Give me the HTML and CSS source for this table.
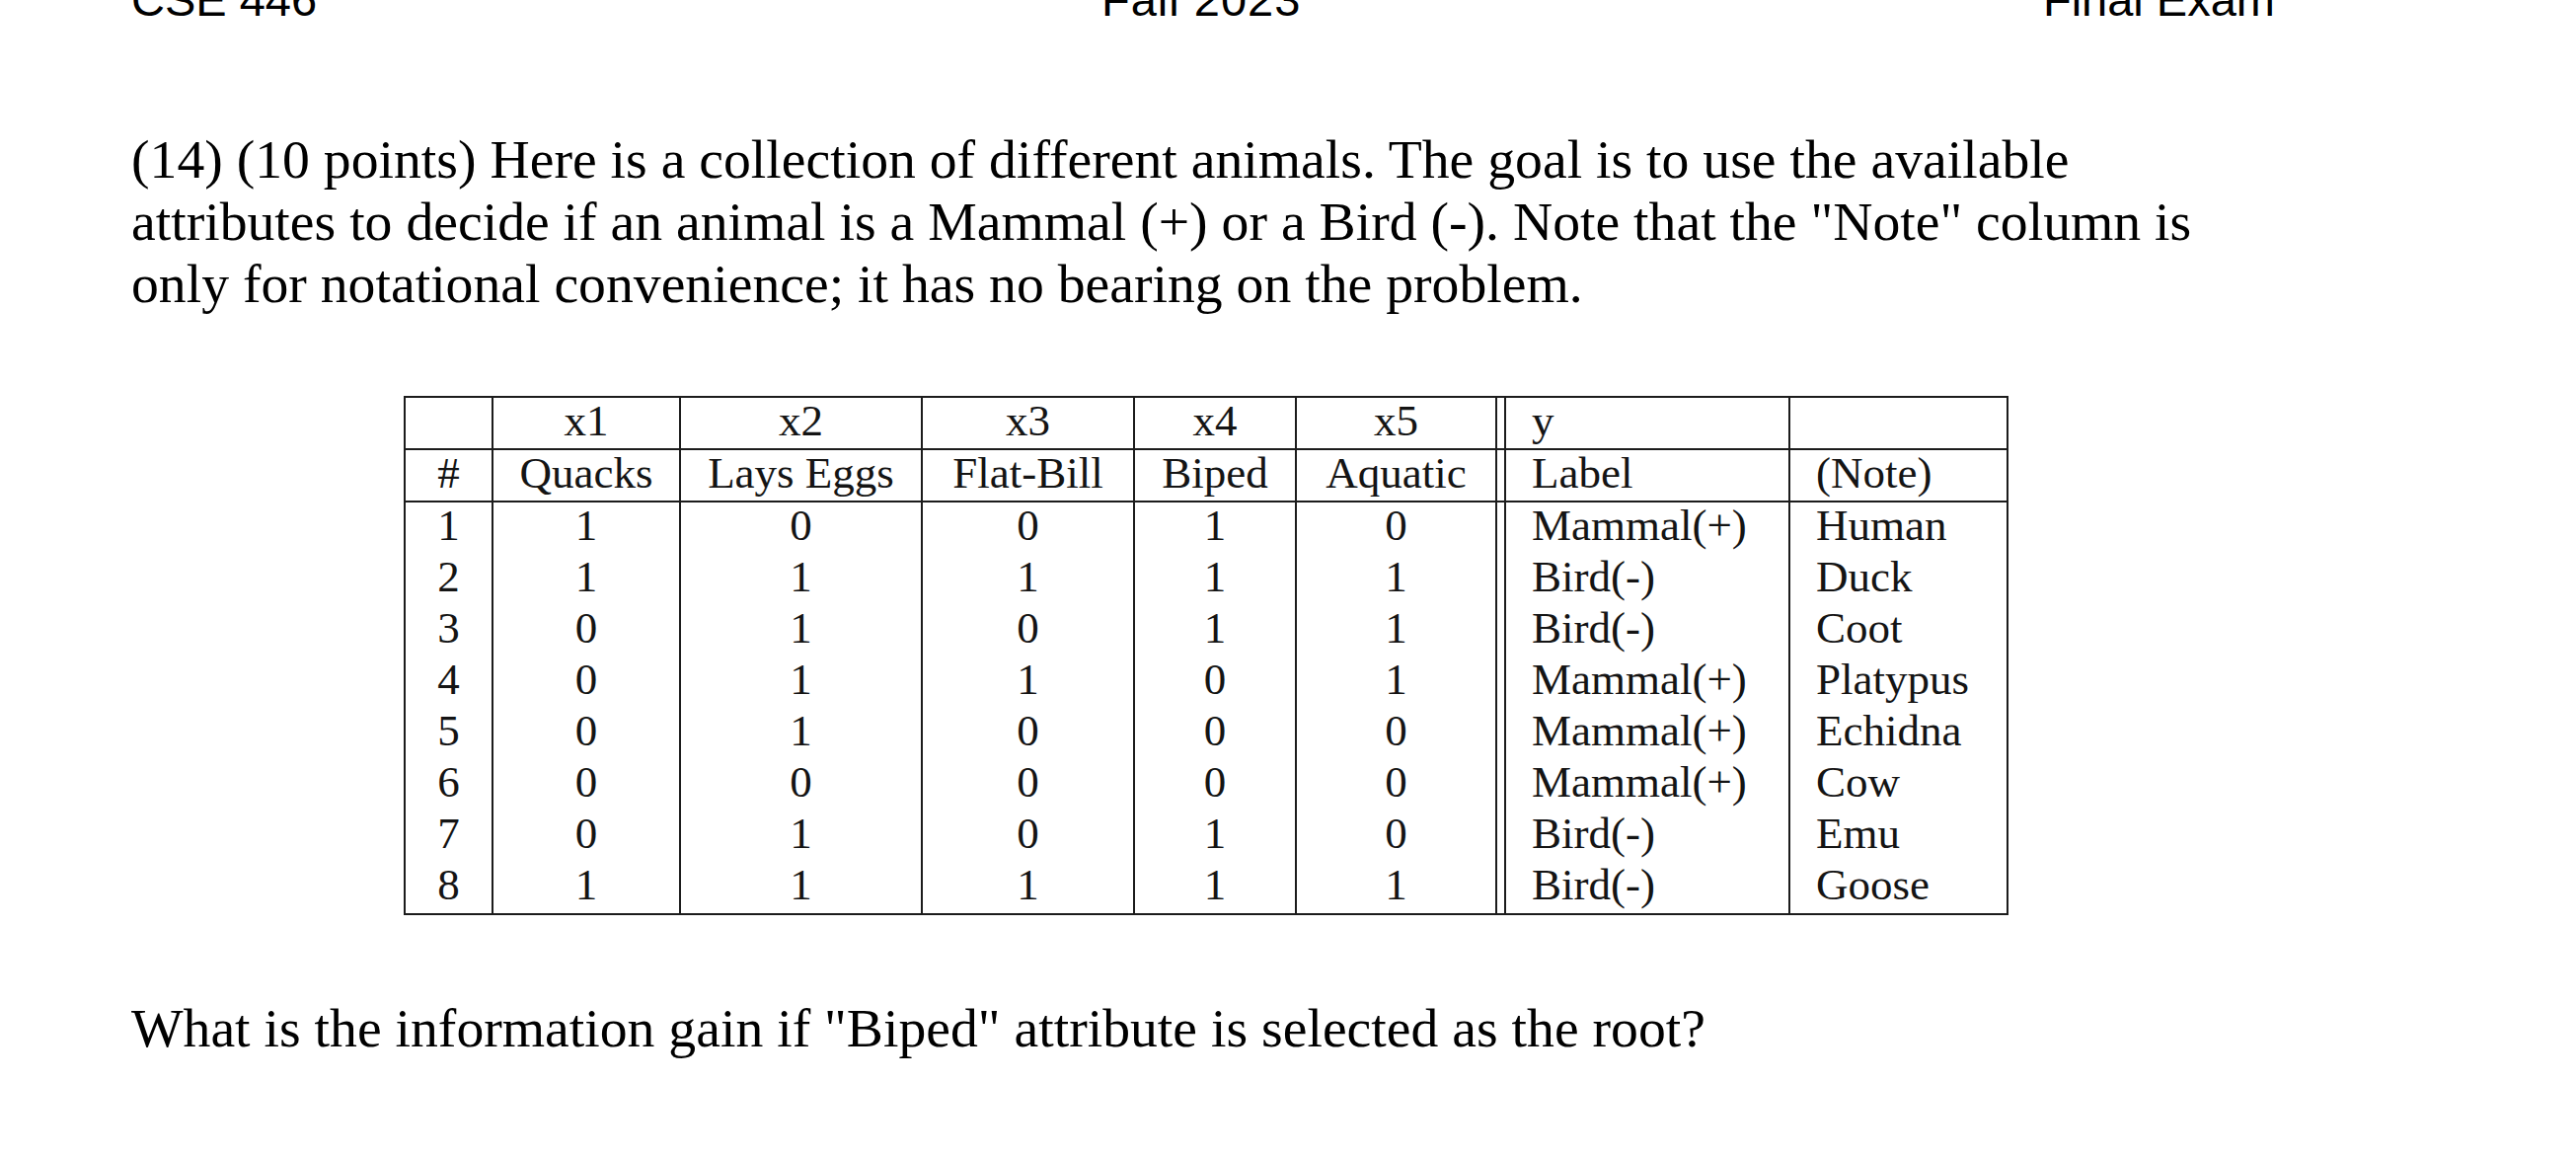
FILE: index.html
```html
<!DOCTYPE html>
<html lang="en">
<head>
<meta charset="utf-8">
<title>CSE 446 Final Exam</title>
<link rel="stylesheet" href="styles.css">
</head>
<body>
<div class="page">
  <header class="running-head">
    <span class="rh-left">CSE 446</span>
    <span class="rh-center">Fall 2023</span>
    <span class="rh-right">Final Exam</span>
  </header>

  <p class="question">(14) (10 points) Here is a collection of different animals. The goal is to use the available<br>attributes to decide if an animal is a Mammal (+) or a Bird (-). Note that the "Note" column is<br>only for notational convenience; it has no bearing on the problem.</p>

  <table class="data">
    <colgroup>
      <col class="c-num">
      <col class="c-x1">
      <col class="c-x2">
      <col class="c-x3">
      <col class="c-x4">
      <col class="c-x5">
      <col class="c-sep">
      <col class="c-label">
      <col class="c-note">
    </colgroup>
    <thead>
      <tr class="head">
        <td></td><td>x1</td><td>x2</td><td>x3</td><td>x4</td><td>x5</td><td class="sep"></td><td class="txt">y</td><td class="txt"></td>
      </tr>
      <tr class="head">
        <td>#</td><td>Quacks</td><td>Lays Eggs</td><td>Flat-Bill</td><td>Biped</td><td>Aquatic</td><td class="sep"></td><td class="txt">Label</td><td class="txt">(Note)</td>
      </tr>
    </thead>
    <tbody>
      <tr><td>1</td><td>1</td><td>0</td><td>0</td><td>1</td><td>0</td><td class="sep"></td><td class="txt">Mammal(+)</td><td class="txt">Human</td></tr>
      <tr><td>2</td><td>1</td><td>1</td><td>1</td><td>1</td><td>1</td><td class="sep"></td><td class="txt">Bird(-)</td><td class="txt">Duck</td></tr>
      <tr><td>3</td><td>0</td><td>1</td><td>0</td><td>1</td><td>1</td><td class="sep"></td><td class="txt">Bird(-)</td><td class="txt">Coot</td></tr>
      <tr><td>4</td><td>0</td><td>1</td><td>1</td><td>0</td><td>1</td><td class="sep"></td><td class="txt">Mammal(+)</td><td class="txt">Platypus</td></tr>
      <tr><td>5</td><td>0</td><td>1</td><td>0</td><td>0</td><td>0</td><td class="sep"></td><td class="txt">Mammal(+)</td><td class="txt">Echidna</td></tr>
      <tr><td>6</td><td>0</td><td>0</td><td>0</td><td>0</td><td>0</td><td class="sep"></td><td class="txt">Mammal(+)</td><td class="txt">Cow</td></tr>
      <tr><td>7</td><td>0</td><td>1</td><td>0</td><td>1</td><td>0</td><td class="sep"></td><td class="txt">Bird(-)</td><td class="txt">Emu</td></tr>
      <tr class="last"><td>8</td><td>1</td><td>1</td><td>1</td><td>1</td><td>1</td><td class="sep"></td><td class="txt">Bird(-)</td><td class="txt">Goose</td></tr>
    </tbody>
  </table>

  <p class="prompt">What is the information gain if "Biped" attribute is selected as the root?</p>
</div>
</body>
</html>
```

FILE: styles.css
```css
html, body {
  margin: 0;
  padding: 0;
  background: #ffffff;
}

body {
  width: 2610px;
  height: 1174px;
  overflow: hidden;
  color: #000;
  font-family: "Liberation Serif", "Times New Roman", serif;
}

.page {
  width: 2172px;
  padding-left: 133px;
}

.running-head {
  display: grid;
  grid-template-columns: 983px auto 1fr;
  margin-top: -22px;
  height: 44px;
  font-family: "Liberation Sans", Arial, sans-serif;
  font-size: 47px;
  line-height: 44px;
  color: #000;
}

.rh-center {
  letter-spacing: 1px;
}

.rh-right {
  justify-self: end;
}

.question {
  margin: 108px 0 0;
  font-size: 55.7px;
  line-height: 63px;
  white-space: nowrap;
}

.data {
  margin: 82px 0 0 276px;
  border-collapse: collapse;
  table-layout: fixed;
  width: 1626px;
  font-family: "Liberation Serif", "Times New Roman", serif;
  font-size: 45px;
  color: #141414;
  border: 2px solid #1c1c1c;
}

.c-num { width: 89px; }
.c-x1 { width: 190px; }
.c-x2 { width: 245px; }
.c-x3 { width: 215px; }
.c-x4 { width: 164px; }
.c-x5 { width: 203px; }
.c-sep { width: 9px; }
.c-label { width: 288px; }
.c-note { width: 221px; }

.data td {
  padding: 0 0 5px;
  line-height: 47px;
  text-align: center;
  white-space: nowrap;
  border-left: 2px solid #1c1c1c;
  border-right: 2px solid #1c1c1c;
}

.data tr.head td {
  padding-bottom: 4px;
  border-bottom: 2px solid #1c1c1c;
}

.data td.txt {
  text-align: left;
  padding-left: 26px;
}

.data td.sep {
  padding: 0;
}

.prompt {
  margin: 83px 0 0;
  font-size: 55.7px;
  line-height: 63px;
  white-space: nowrap;
}
```
